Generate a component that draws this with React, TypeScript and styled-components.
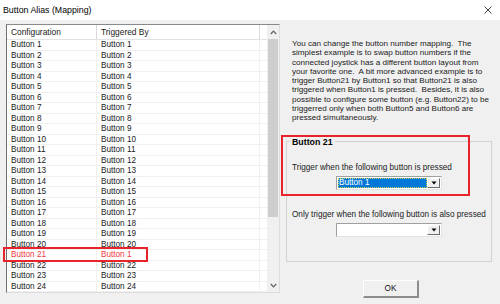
import React from "react";
import styled, { createGlobalStyle } from "styled-components";

const Global = createGlobalStyle`
  html, body { margin: 0; padding: 0; background: #f0f0f0; }
  * { box-sizing: border-box; }
`;

const FONT = `"Liberation Sans", Arial, sans-serif`;

const Window = styled.div`
  position: relative;
  width: 500px;
  height: 304px;
  background: #f0f0f0;
  font-family: ${FONT};
  color: #000;
  display: flex;
  flex-direction: column;
  overflow: hidden;
`;

const TitleBar = styled.div`
  height: 20px;
  flex: none;
  background: #fff;
  display: flex;
  align-items: center;
  justify-content: space-between;
  padding: 0 8px 0 3px;
`;

const Title = styled.span`
  font-size: 8.8px;
  color: #000;
`;

const Body = styled.div`
  flex: 1;
  display: flex;
  padding: 4px 0 0 6px;
`;

const ListBox = styled.div`
  width: 274px;
  height: 269px;
  flex: none;
  display: flex;
  border-top: 1px solid #8a8a8a;
  border-left: 1px solid #6e6e6e;
  border-right: 1px solid #dcdcdc;
  border-bottom: 1px solid #dcdcdc;
  background: #fff;
`;

const Columns = styled.div`
  flex: 1;
  display: flex;
  flex-direction: column;
  overflow: hidden;
`;

const HeaderRow = styled.div`
  height: 15px;
  flex: none;
  display: grid;
  grid-template-columns: 90px 163px 1fr;
  border-bottom: 1px solid #e3e3e3;
`;

const HeaderCell = styled.div<{ $last?: boolean }>`
  font-size: 8.4px;
  padding-left: 4px;
  display: flex;
  align-items: center;
  color: #1a1a1a;
  border-right: ${(p) => (p.$last ? "none" : "1px solid #d9d9d9")};
`;

const Row = styled.div`
  height: 10.5px;
  flex: none;
  display: grid;
  grid-template-columns: 90px 163px 1fr;
  border-bottom: 1px solid #f0f0f0;
`;

const Cell = styled.div<{ $alert?: boolean; $last?: boolean }>`
  font-size: 8.2px;
  line-height: 9.5px;
  padding-left: 4px;
  white-space: nowrap;
  color: ${(p) => (p.$alert ? "#f0383e" : "#1a1a1a")};
  border-right: ${(p) => (p.$last ? "none" : "1px solid #f0f0f0")};
`;

const ScrollBar = styled.div`
  width: 12px;
  flex: none;
  background: #f0f0f0;
  display: flex;
  flex-direction: column;
  align-items: center;
`;

const ScrollArrow = styled.div`
  height: 14px;
  width: 100%;
  flex: none;
  display: flex;
  align-items: center;
  justify-content: center;
`;

const Thumb = styled.div`
  width: 10px;
  height: 178px;
  background: #cdcdcd;
  flex: none;
`;

const ScrollSpacer = styled.div`
  flex: 1;
`;

const RightPanel = styled.div`
  width: 220px;
  flex: none;
  display: flex;
  flex-direction: column;
  padding-top: 15px;
`;

const Para = styled.div`
  padding-left: 12px;
  font-size: 8.1px;
  line-height: 9.3px;
  color: #1a1a1a;
`;

const Line = styled.div`
  white-space: pre;
`;

const Group = styled.fieldset`
  margin: 14px 0 0 6px;
  width: 206px;
  padding: 0 0 24px 0;
  border: 1px solid #d2d2d2;
  display: flex;
  flex-direction: column;
  min-inline-size: 0;
`;

const Legend = styled.legend`
  margin-left: 3px;
  padding: 0 2px;
  font-size: 8.8px;
  font-weight: bold;
  line-height: 10px;
`;

const FieldLabel = styled.div<{ $top: number }>`
  margin-top: ${(p) => p.$top}px;
  padding-left: 5px;
  font-size: 8.2px;
  line-height: 9.3px;
  color: #1a1a1a;
  white-space: nowrap;
`;

const Combo = styled.div`
  margin: 3.7px auto 0;
  width: 106px;
  height: 14px;
  display: flex;
  background: #fff;
  border-top: 1px solid #a0a0a0;
  border-left: 1px solid #a0a0a0;
  border-right: 1px solid #e3e3e3;
  border-bottom: 1px solid #e3e3e3;
  padding: 1px;
`;

const ComboValue = styled.div<{ $selected?: boolean }>`
  flex: 1;
  font-size: 8.2px;
  line-height: 10px;
  padding-left: 1px;
  color: #fff;
  background: ${(p) => (p.$selected ? "#0078d7" : "#fff")};
  outline: ${(p) => (p.$selected ? "1px dotted #c8d25a" : "none")};
  outline-offset: -1px;
`;

const ComboButton = styled.div`
  width: 13px;
  flex: none;
  background: #f0f0f0;
  border-top: 1px solid #fff;
  border-left: 1px solid #fff;
  border-right: 1px solid #6a6a6a;
  border-bottom: 1px solid #6a6a6a;
  display: flex;
  align-items: center;
  justify-content: center;
`;

const OkButton = styled.button`
  margin: 18px auto 0;
  width: 56px;
  height: 18px;
  font-family: ${FONT};
  font-size: 8.2px;
  color: #111;
  background: #f0f0f0;
  border-top: 1px solid #fff;
  border-left: 1px solid #fff;
  border-right: 2px solid #8c8c8c;
  border-bottom: 2px solid #8c8c8c;
  padding: 0;
  display: flex;
  align-items: center;
  justify-content: center;
  position: relative;
  left: 1px;
`;

const Highlight = styled.div<{ $l: number; $t: number; $w: number; $h: number }>`
  position: absolute;
  left: ${(p) => p.$l}px;
  top: ${(p) => p.$t}px;
  width: ${(p) => p.$w}px;
  height: ${(p) => p.$h}px;
  border: 2px solid #e8232b;
  pointer-events: none;
`;

const CloseIcon = () => (
  <svg width="8" height="8" viewBox="0 0 8 8">
    <path d="M0.5 0.5 L7.5 7.5 M7.5 0.5 L0.5 7.5" stroke="#333" strokeWidth="0.9" />
  </svg>
);

const Chevron = ({ up }: { up?: boolean }) => (
  <svg width="7" height="5" viewBox="0 0 7 5">
    <path
      d={up ? "M0.8 4 L3.5 1.2 L6.2 4" : "M0.8 1 L3.5 3.8 L6.2 1"}
      stroke="#606060"
      strokeWidth="1.2"
      fill="none"
    />
  </svg>
);

const DownTri = () => (
  <svg width="6" height="4" viewBox="0 0 6 4">
    <path d="M0.5 0.5 L5.5 0.5 L3 3.5 Z" fill="#000" />
  </svg>
);

const rows = Array.from({ length: 24 }, (_, i) => ({
  config: `Button ${i + 1}`,
  trig: i === 20 ? "Button 1" : `Button ${i + 1}`,
  alert: i === 20,
}));

const paragraph = [
  "You can change the button number mapping.  The",
  "simplest example is to swap button numbers if the",
  "connected joystick has a different button layout from",
  "your favorite one.  A bit more advanced example is to",
  "trigger Button21 by Button1 so that Button21 is also",
  "triggered when Button1 is pressed.  Besides, it is also",
  "possible to configure some button (e.g. Button22) to be",
  "triggerred only when both Button5 and Button6 are",
  "pressed simultaneously.",
];

export default function App() {
  return (
    <>
      <Global />
      <Window>
        <TitleBar>
          <Title>Button Alias (Mapping)</Title>
          <CloseIcon />
        </TitleBar>
        <Body>
          <ListBox>
            <Columns>
              <HeaderRow>
                <HeaderCell>Configuration</HeaderCell>
                <HeaderCell>Triggered By</HeaderCell>
                <HeaderCell $last />
              </HeaderRow>
              {rows.map((r) => (
                <Row key={r.config}>
                  <Cell $alert={r.alert}>{r.config}</Cell>
                  <Cell $alert={r.alert}>{r.trig}</Cell>
                  <Cell $last />
                </Row>
              ))}
            </Columns>
            <ScrollBar>
              <ScrollArrow>
                <Chevron up />
              </ScrollArrow>
              <Thumb />
              <ScrollSpacer />
              <ScrollArrow>
                <Chevron />
              </ScrollArrow>
            </ScrollBar>
          </ListBox>
          <RightPanel>
            <Para>
              {paragraph.map((l) => (
                <Line key={l}>{l}</Line>
              ))}
            </Para>
            <Group>
              <Legend>Button 21</Legend>
              <FieldLabel $top={16.5}>Trigger when the following button is pressed</FieldLabel>
              <Combo>
                <ComboValue $selected>Button 1</ComboValue>
                <ComboButton>
                  <DownTri />
                </ComboButton>
              </Combo>
              <FieldLabel $top={20}>Only trigger when the following button is also pressed</FieldLabel>
              <Combo>
                <ComboValue />
                <ComboButton>
                  <DownTri />
                </ComboButton>
              </Combo>
            </Group>
            <OkButton>OK</OkButton>
          </RightPanel>
        </Body>
        <Highlight $l={3} $t={247} $w={145} $h={15} />
        <Highlight $l={281} $t={135} $w={189} $h={61} />
      </Window>
    </>
  );
}
